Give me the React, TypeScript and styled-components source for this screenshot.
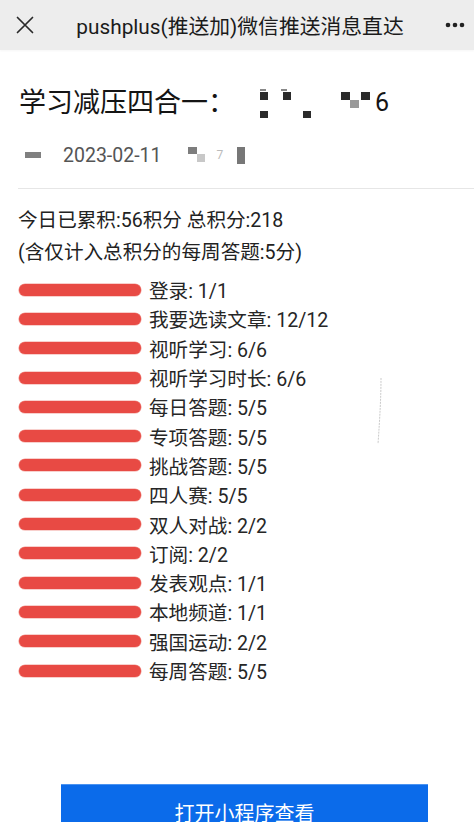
import React from "react";
import styled, { createGlobalStyle } from "styled-components";

const Global = createGlobalStyle`
  html, body { margin: 0; padding: 0; background: #fff; }
  body { font-family: Roboto, "Noto Sans CJK SC", sans-serif; color: #222; }
`;

const Page = styled.div`
  position: relative;
  width: 474px;
  height: 822px;
  overflow: hidden;
  background: #fff;
`;

const Header = styled.header`
  height: 50px;
  background: #ededed;
  display: grid;
  grid-template-columns: 50px 1fr 50px;
  align-items: center;
  box-shadow: 0 1px 2px rgba(0, 0, 0, 0.04);
`;

const IconBox = styled.div<{ $align: "start" | "end" }>`
  display: flex;
  justify-content: ${(p) => (p.$align === "start" ? "flex-start" : "flex-end")};
  padding: ${(p) => (p.$align === "start" ? "0 0 0 16px" : "0 9px 0 0")};
  align-items: center;
`;

const HeaderTitle = styled.div`
  text-align: center;
  font-size: 20.8px;
  color: #1b1b1b;
  white-space: nowrap;
  margin-left: 6px;
  margin-top: -1px;
`;

const Content = styled.main`
  padding: 35px 0 0 19px;
`;

const Title = styled.h1`
  margin: 0;
  font-weight: 400;
  font-size: 27px;
  line-height: 36px;
  color: #141414;
  display: flex;
  align-items: center;
  white-space: nowrap;
`;

const Mosaic = styled.svg<{ $ml: number }>`
  display: block;
  flex: none;
  margin-left: ${(p) => p.$ml}px;
`;

const TitleTail = styled.span`
  font-size: 25px;
  margin-left: 3px;
`;

const DateLine = styled.div`
  margin-top: 20px;
  display: flex;
  align-items: center;
  height: 28px;
  font-size: 19.5px;
  color: #555;
  white-space: nowrap;
`;

const DateText = styled.span`
  margin-left: 21px;
`;

const Faint = styled.span`
  color: #bbb;
  font-size: 12px;
  margin-left: 10px;
`;

const Divider = styled.hr`
  margin: 19px 0 0 -1px;
  border: 0;
  border-top: 1px solid #e6e6e6;
  height: 0;
`;

const Stats = styled.div`
  margin-top: 16px;
  font-size: 19.6px;
  line-height: 32px;
  color: #222;
`;

const StatLine = styled.div`
  margin-left: -1px;
`;

const List = styled.div`
  margin-top: 6px;
`;

const Row = styled.div`
  display: flex;
  align-items: center;
  height: 29.3px;
  font-size: 19.6px;
  color: #262626;
  white-space: nowrap;
`;

const Bar = styled.div`
  width: 122px;
  height: 12px;
  border-radius: 6px;
  background: #e84a44;
  box-shadow: 0 0 0 0.6px #f2a29c;
  margin-right: 8px;
  flex: none;
`;

const ButtonWrap = styled.div`
  margin-top: 99px;
  display: flex;
  padding-left: 61px;
`;

const OpenButton = styled.button`
  width: 367px;
  height: 56px;
  border: 0;
  background: #0b6bea;
  color: #fff;
  font-family: inherit;
  font-size: 20px;
  padding: 0;
  border-top: 1px solid #4b93f0;
`;

const Artifact = styled.svg`
  position: absolute;
  left: 376px;
  top: 376px;
`;

const items: [string, string][] = [
  ["登录", "1/1"],
  ["我要选读文章", "12/12"],
  ["视听学习", "6/6"],
  ["视听学习时长", "6/6"],
  ["每日答题", "5/5"],
  ["专项答题", "5/5"],
  ["挑战答题", "5/5"],
  ["四人赛", "5/5"],
  ["双人对战", "2/2"],
  ["订阅", "2/2"],
  ["发表观点", "1/1"],
  ["本地频道", "1/1"],
  ["强国运动", "2/2"],
  ["每周答题", "5/5"],
];

export default function App() {
  return (
    <Page>
      <Global />
      <Header>
        <IconBox $align="start">
          <svg width="18" height="18" viewBox="0 0 18 18" fill="none" stroke="#2a2a2a" strokeWidth="1.7" strokeLinecap="round">
            <path d="M1.5 1.5 L16.5 16.5 M16.5 1.5 L1.5 16.5" />
          </svg>
        </IconBox>
        <HeaderTitle>pushplus(推送加)微信推送消息直达</HeaderTitle>
        <IconBox $align="end">
          <svg width="20" height="6" viewBox="0 0 20 6" fill="#222">
            <circle cx="3" cy="3" r="2.3" />
            <circle cx="10" cy="3" r="2.3" />
            <circle cx="17" cy="3" r="2.3" />
          </svg>
        </IconBox>
      </Header>
      <Content>
        <Title>
          学习减压四合一：
          <Mosaic $ml={25} width="112" height="30" viewBox="0 0 112 30">
            <rect x="0" y="4" width="8" height="8" fill="#2b2b2b" />
            <rect x="-1" y="1" width="7" height="2" fill="#888" />
            <rect x="0" y="23" width="8" height="8" fill="#2b2b2b" />
            <rect x="23" y="4" width="8" height="8" fill="#2b2b2b" />
            <rect x="21" y="1" width="6" height="2" fill="#888" />
            <rect x="43" y="23" width="8" height="8" fill="#2b2b2b" />
            <rect x="81" y="4" width="9" height="8" fill="#2b2b2b" />
            <rect x="90" y="12" width="9" height="8" fill="#999" />
            <rect x="101" y="4" width="9" height="8" fill="#2b2b2b" />
          </Mosaic>
          <TitleTail>6</TitleTail>
        </Title>
        <DateLine>
          <Mosaic $ml={6} width="17" height="8" viewBox="0 0 17 8">
            <rect x="0" y="1" width="16" height="6" fill="#808080" />
          </Mosaic>
          <DateText>2023-02-11</DateText>
          <Mosaic $ml={27} width="18" height="16" viewBox="0 0 18 16">
            <rect x="0" y="0" width="9" height="7" fill="#7d7d7d" />
            <rect x="9" y="7" width="8" height="8" fill="#c8c8c8" />
          </Mosaic>
          <Faint>7</Faint>
          <Mosaic $ml={14} width="9" height="17" viewBox="0 0 9 17">
            <rect x="0" y="0" width="8" height="17" fill="#777" />
          </Mosaic>
        </DateLine>
        <Divider />
        <Stats>
          <StatLine>今日已累积:56积分 总积分:218</StatLine>
          <StatLine>(含仅计入总积分的每周答题:5分)</StatLine>
        </Stats>
        <List>
          {items.map(([name, value]) => (
            <Row key={name}>
              <Bar />
              {name}: {value}
            </Row>
          ))}
        </List>
      </Content>
      <ButtonWrap>
        <OpenButton>打开小程序查看</OpenButton>
      </ButtonWrap>
      <Artifact width="8" height="72" viewBox="0 0 8 72" fill="none">
        <path d="M5 2 C5 20 4 40 2 68" stroke="#bdbdbd" strokeWidth="0.8" strokeDasharray="2 1" />
      </Artifact>
    </Page>
  );
}
